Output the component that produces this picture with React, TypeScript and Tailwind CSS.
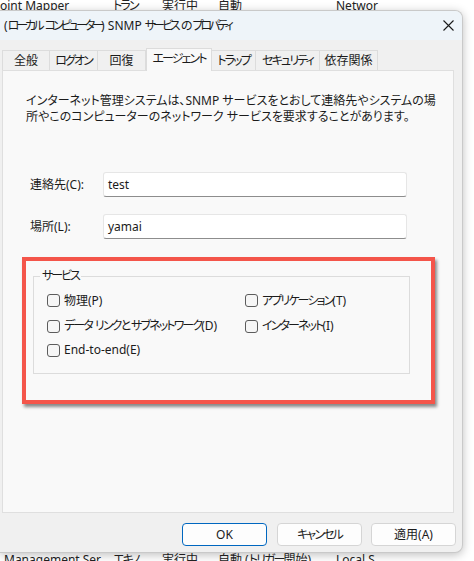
import React from 'react';

const font = "font-['Noto_Sans','Noto_Sans_CJK_JP',sans-serif] [font-feature-settings:'palt']";

// katakana run, narrowed to match the UI font's proportional kana
const K: React.FC<{ children: React.ReactNode; wide?: boolean }> = ({ children, wide }) => (
  <span className={wide ? 'tracking-[-3px]' : 'tracking-[-1.9px]'}>{children}</span>
);

const tabs: { key: string; label: React.ReactNode; w: string; active?: boolean }[] = [
  { key: 'general', label: '全般', w: 'w-[48px]' },
  { key: 'logon', label: <K>ログオン</K>, w: 'w-[48px]' },
  { key: 'recovery', label: '回復', w: 'w-[48px]' },
  { key: 'agent', label: <K>エージェント</K>, w: 'w-[66px]', active: true },
  { key: 'trap', label: <K>トラップ</K>, w: 'w-[44px]' },
  { key: 'security', label: <K>セキュリティ</K>, w: 'w-[64px]' },
  { key: 'deps', label: '依存関係', w: 'w-[58px]' },
];

const Checkbox: React.FC<{ children: React.ReactNode }> = ({ children }) => (
  <label className="flex items-center">
    <span className="w-[13px] h-[13px] border border-[#5c5c5c] rounded-[3px] bg-[#f6f6f6]" />
    <span className="ml-[4px] text-[12px] leading-[16px] text-[#1b1b1b] whitespace-nowrap">{children}</span>
  </label>
);

const Field: React.FC<{ label: string; value: string }> = ({ label, value }) => (
  <div className="flex items-center pl-[27px]">
    <span className="w-[73px] text-[12px] text-[#1b1b1b]">{label}</span>
    <div className="w-[304px] h-[25px] bg-white border border-[#e6e6e6] border-b-[#8d8d8d] rounded-[3px] flex items-center px-[4px] text-[12px] text-[#1b1b1b]">
      {value}
    </div>
  </div>
);

const Button: React.FC<{ children: React.ReactNode; primary?: boolean; className?: string }> = ({
  children,
  primary,
  className,
}) => (
  <button
    className={`w-[85px] h-[23px] rounded-[4px] bg-[#fdfdfd] text-[12px] text-[#1b1b1b] flex items-center justify-center ${
      primary ? 'border border-[#0067c0]' : 'border border-[#d5d5d5]'
    } ${className ?? ''}`}
  >
    {children}
  </button>
);

export default function App() {
  return (
    <div className={`relative w-[474px] h-[561px] bg-white overflow-hidden ${font}`}>
      {/* service list behind the dialog */}
      <div className="absolute inset-0 text-[12px] text-[#222]">
        <div className="flex h-[14px] -mt-[1px] leading-[14px] whitespace-nowrap">
          <span className="w-[113px]">oint Mapper</span>
          <span className="w-[49px]"><K>トラン</K></span>
          <span className="w-[56px]">実行中</span>
          <span className="w-[118px]">自動</span>
          <span>Networ</span>
        </div>
        <div className="flex h-[14px] mt-[540px] leading-[14px] whitespace-nowrap">
          <span className="w-[113px] pl-[4px]">Management Ser</span>
          <span className="w-[49px]"><K>エキノ</K></span>
          <span className="w-[56px]">実行中</span>
          <span className="w-[118px]">自動 (<K>トリガー</K>開始)</span>
          <span>Local S</span>
        </div>
      </div>

      {/* dialog */}
      <div className="relative z-10 mt-[10px] w-[463px] h-[543px] rounded-r-[8px] bg-[#f0f0f0] shadow-[0_2px_10px_rgba(0,0,0,0.25)] border-r border-b border-t border-[#c9c9c9] overflow-hidden">
        <div className="h-[29px] bg-[#eef4f9] flex items-center justify-between pl-[4px] pr-[8px]">
          <span className="text-[12px] text-[#1b1b1b] whitespace-nowrap">
            (<K wide>ローカル</K> <K wide>コンピューター</K>) SNMP <K wide>サービス</K> の<K wide>プロパティ</K>
          </span>
          <svg width="11" height="11" viewBox="0 0 11 11">
            <path d="M0.5 0.5L10.5 10.5M10.5 0.5L0.5 10.5" stroke="#1a1a1a" strokeWidth="1.1" />
          </svg>
        </div>

        <div className="flex items-end h-[22px] mt-[8px] ml-[2px]">
          {tabs.map((t) =>
            t.active ? (
              <div
                key={t.key}
                className={`${t.w} h-[23px] -mb-[1px] relative z-10 bg-[#f9f9f9] border border-b-0 border-[#dcdcdc] flex items-center justify-center text-[12px] text-[#1b1b1b] whitespace-nowrap pb-[2px]`}
              >
                {t.label}
              </div>
            ) : (
              <div
                key={t.key}
                className={`${t.w} h-[20px] bg-[#f0f0f0] border border-b-0 border-l-0 border-[#dcdcdc] first:border-l flex items-center justify-center text-[12px] text-[#1b1b1b] whitespace-nowrap`}
              >
                {t.label}
              </div>
            )
          )}
        </div>

        <div className="ml-[2px] w-[452px] h-[443px] bg-[#f9f9f9] border border-[#dfdfdf]">
          <p className="pl-[23px] pt-[22px] text-[12px] leading-[16px] text-[#1b1b1b]">
            インターネット管理システムは、SNMP サービスをとおして連絡先やシステムの場
            <br />
            所やこのコンピューターのネットワーク サービスを要求することがあります。
          </p>

          <div className="mt-[47px]">
            <Field label="連絡先(C):" value="test" />
          </div>
          <div className="mt-[17px]">
            <Field label="場所(L):" value="yamai" />
          </div>

          <div className="mt-[18px] ml-[19px] w-[413px] h-[147px] border-[4px] border-[#f4554a] shadow-[2px_3px_3px_rgba(0,0,0,0.45)]">
            <div className="relative mt-[15px] ml-[7px] w-[377px] h-[98px] border border-[#dcdcdc]">
              <span className="absolute -top-[9px] left-[6px] px-[2px] bg-[#f9f9f9] text-[12px] leading-[16px] text-[#1b1b1b] tracking-[-2px]">
                サービス
              </span>
              <div className="pl-[13px] pt-[10px]">
                <div className="flex h-[27px] items-center">
                  <div className="w-[198px]">
                    <Checkbox>物理(P)</Checkbox>
                  </div>
                  <Checkbox>
                    <K>アプリケーション</K>(T)
                  </Checkbox>
                </div>
                <div className="flex h-[24px] items-center">
                  <div className="w-[198px]">
                    <Checkbox>
                      <K>データ</K> <K>リンク</K>と<K>サブネットワーク</K>(D)
                    </Checkbox>
                  </div>
                  <Checkbox>
                    <K>インターネット</K>(I)
                  </Checkbox>
                </div>
                <div className="flex h-[24px] items-center">
                  <Checkbox>End-to-end(E)</Checkbox>
                </div>
              </div>
            </div>
          </div>
        </div>

        <div className="flex justify-end mt-[10px] pr-[6px]">
          <Button primary>OK</Button>
          <Button className="ml-[10px]">
            <K>キャンセル</K>
          </Button>
          <Button className="ml-[9px]">適用(A)</Button>
        </div>
      </div>
    </div>
  );
}
